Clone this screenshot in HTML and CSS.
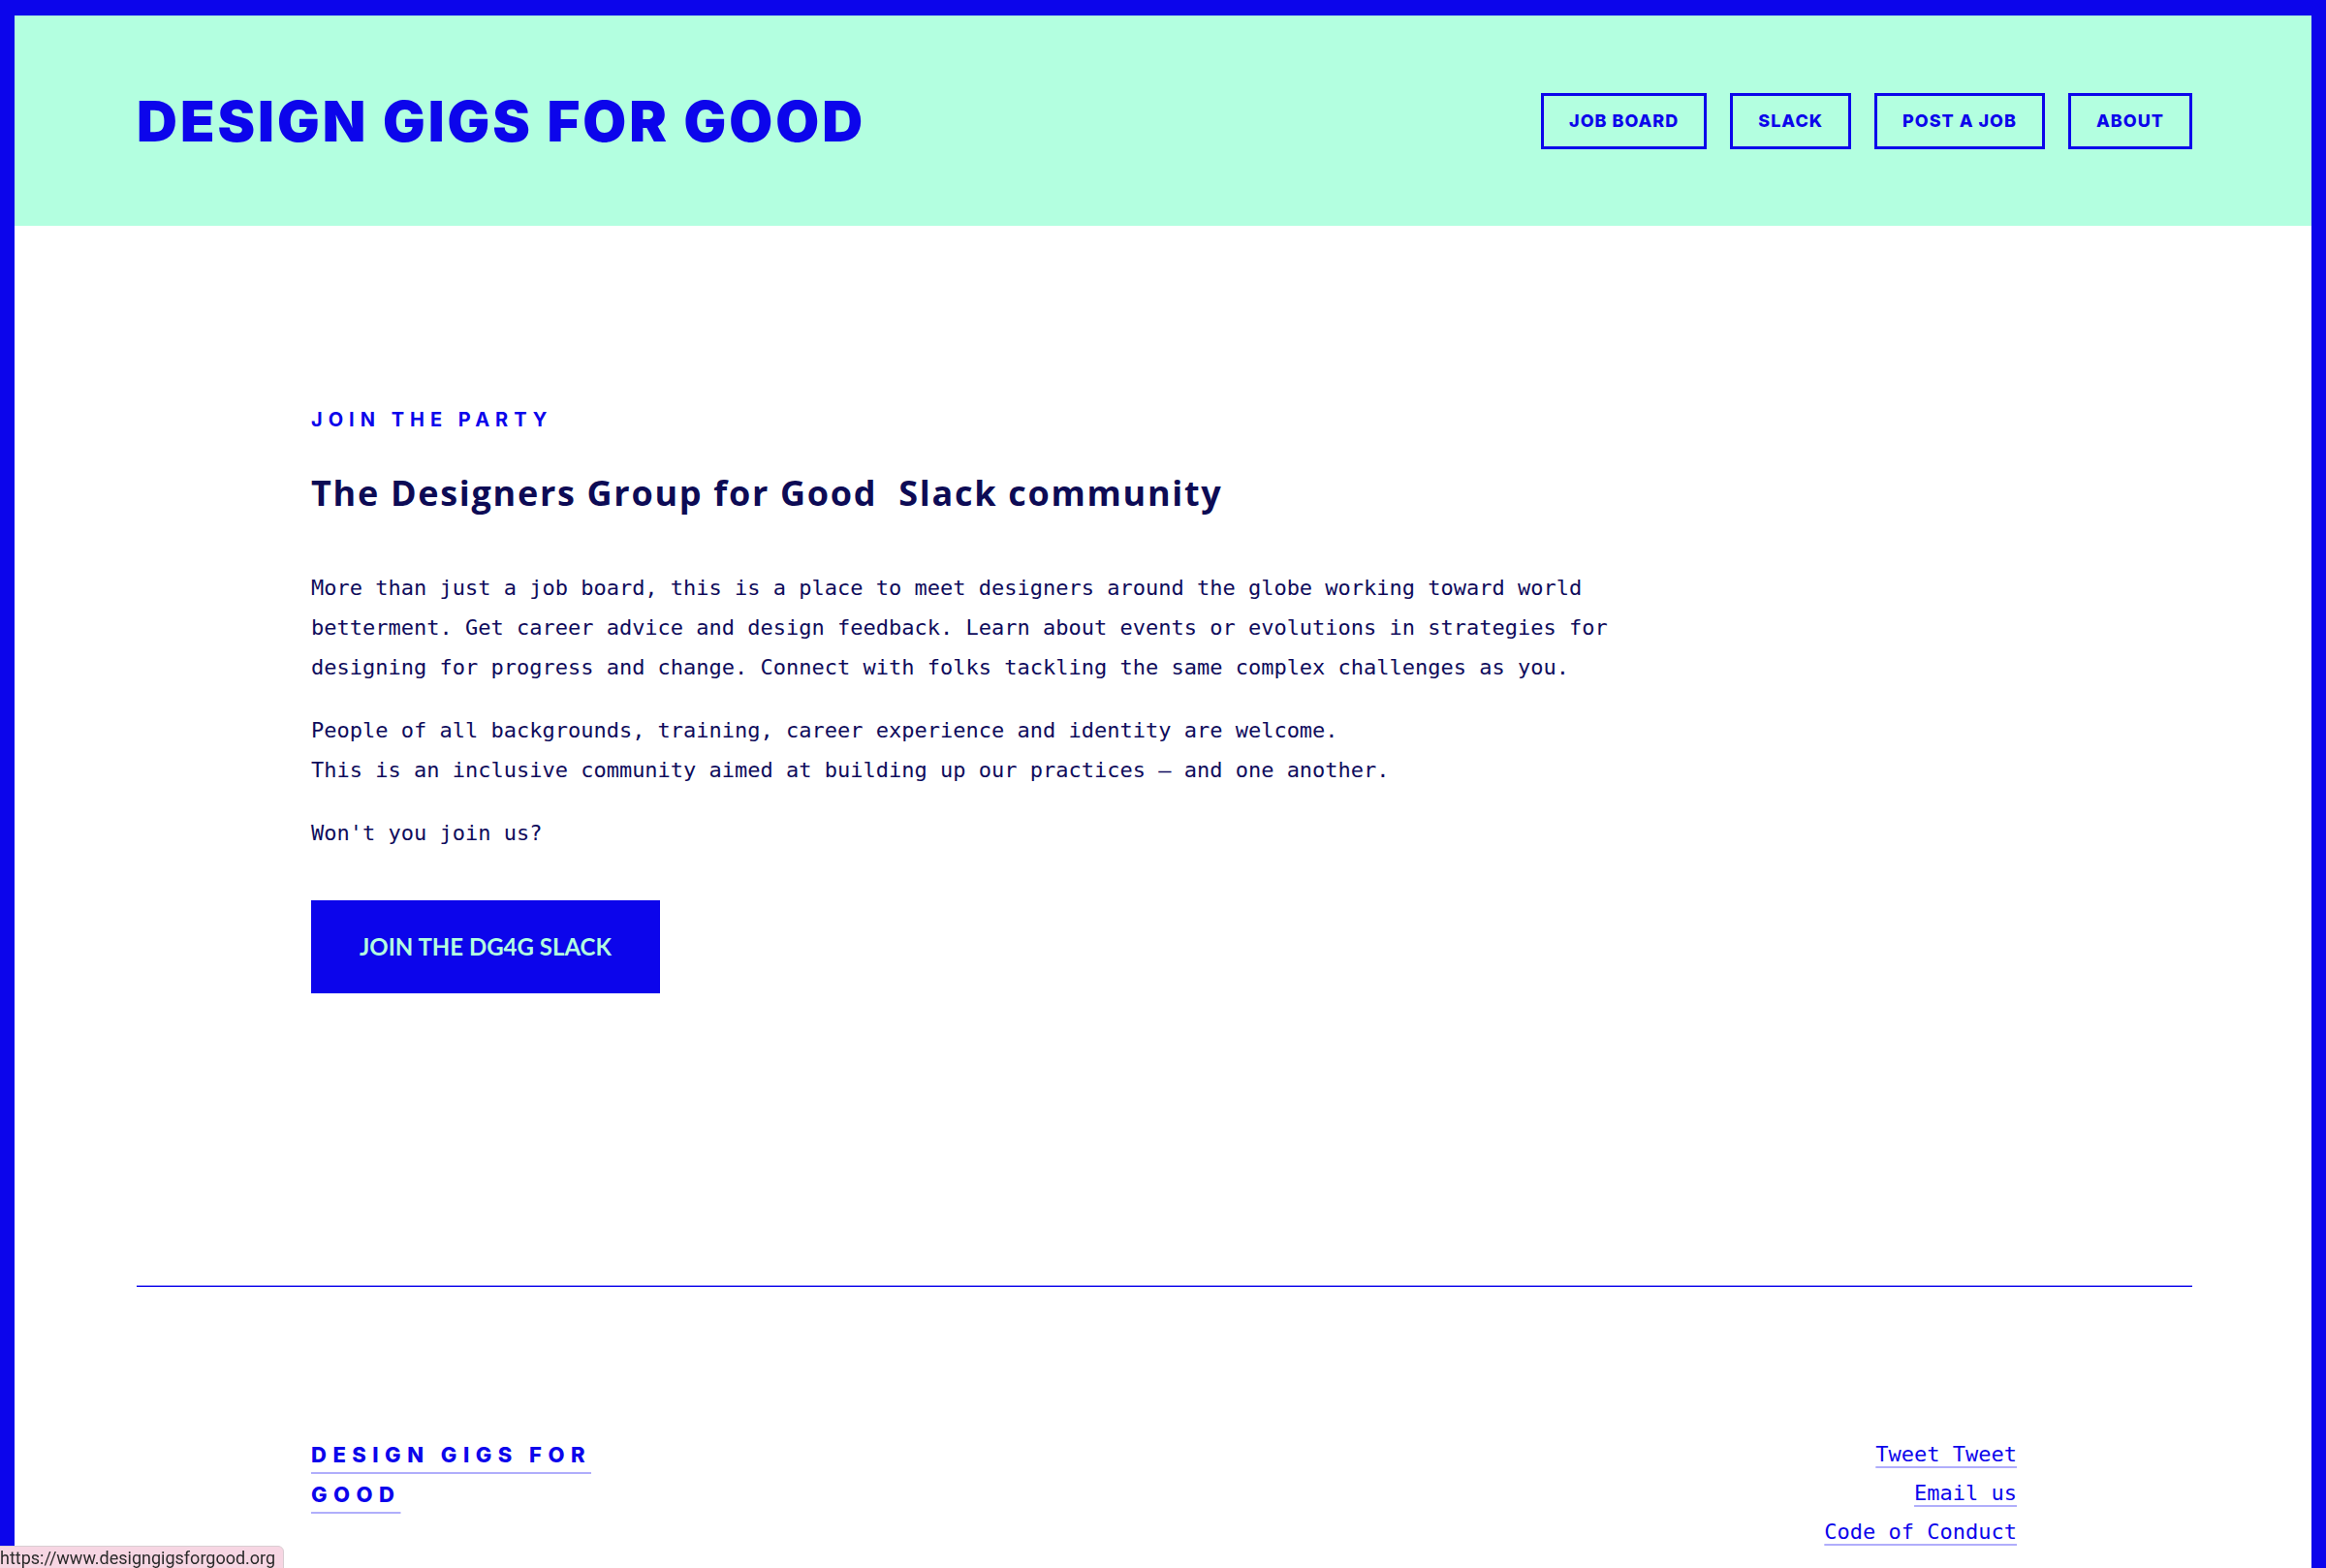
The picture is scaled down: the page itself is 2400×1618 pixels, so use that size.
FILE: index.html
```html
<!DOCTYPE html>
<html lang="en">
<head>
  <meta charset="UTF-8">
  <title>Slack | Design Gigs for Good</title>
  <link rel="stylesheet" href="styles.css">
</head>
<body>
  <div class="frame">
    <header class="site-header">
      <a class="logo" href="#">DESIGN GIGS FOR GOOD</a>
      <nav class="nav">
        <a href="#">Job Board</a>
        <a href="#">Slack</a>
        <a href="#">Post a Job</a>
        <a href="#">About</a>
      </nav>
    </header>

    <main class="content">
      <p class="eyebrow">Join the party</p>
      <h1 class="headline">The Designers Group for Good&nbsp; Slack community</h1>

      <p class="copy">More than just a job board, this is a place to meet designers around the globe working toward world betterment. Get career advice and design feedback. Learn about events or evolutions in strategies for designing for progress and change. Connect with folks tackling the same complex challenges as you.</p>
      <p class="copy">People of all backgrounds, training, career experience and identity are welcome.<br>This is an inclusive community aimed at building up our practices — and one another.</p>
      <p class="copy">Won't you join us?</p>

      <a class="cta" href="#">Join the DG4G Slack</a>
    </main>

    <div class="rule-wrap">
      <hr class="rule">
    </div>

    <footer class="site-footer">
      <div class="footer-brand">
        <a href="#">DESIGN GIGS FOR GOOD</a>
      </div>
      <ul class="footer-links">
        <li><a href="#">Tweet Tweet</a></li>
        <li><a href="#">Email us</a></li>
        <li><a href="#">Code of Conduct</a></li>
      </ul>
    </footer>
  </div>

  <div class="status">https://www.designgigsforgood.org</div>
</body>
</html>
```

FILE: styles.css
```css
body {
  margin: 0;
  background-color: #fff;
  font-family: 'DejaVu Sans Mono', monospace;
  color: #0f0c5c;
}

a {
  color: inherit;
  text-decoration: none;
}

.frame {
  border: 15px solid #0c05eb;
  border-top-width: 16px;
  min-height: 2000px;
}

/* header */

.site-header {
  height: 217px;
  background-color: #b3ffe0;
  padding: 0 123px 0 126px;
  display: flex;
  align-items: center;
  justify-content: space-between;
}

.logo {
  font-family: 'Inter', sans-serif;
  font-weight: 900;
  font-size: 58px;
  line-height: 1;
  letter-spacing: 3px;
  color: #0c05eb;
}

.nav {
  display: flex;
  gap: 24px;
}

.nav a {
  display: block;
  height: 52px;
  line-height: 52px;
  padding: 0 26px;
  border: 3px solid #0c05eb;
  font-family: 'Inter', sans-serif;
  font-weight: 800;
  font-size: 18px;
  letter-spacing: 1px;
  text-transform: uppercase;
  color: #0c05eb;
}

/* main */

.content {
  padding: 188px 306px 301px;
}

.eyebrow {
  margin: 0;
  font-family: 'Inter', sans-serif;
  font-weight: 700;
  font-size: 20px;
  line-height: 24px;
  letter-spacing: 6px;
  text-transform: uppercase;
  color: #0c05eb;
}

.headline {
  margin: 42px 0 55px;
  font-family: 'Open Sans', sans-serif;
  font-weight: 700;
  font-size: 36px;
  line-height: 44px;
  letter-spacing: 1.7px;
  color: #0d0b55;
}

.copy {
  margin: 0 0 24px;
  max-width: 1400px;
  font-size: 22px;
  line-height: 41px;
}

.cta {
  display: inline-block;
  margin-top: 25px;
  height: 96px;
  line-height: 96px;
  padding: 0 50px;
  background-color: #0c05eb;
  font-family: 'Lato', sans-serif;
  font-weight: 700;
  font-size: 24px;
  text-transform: uppercase;
  color: #b3ffe0;
}

/* divider */

.rule-wrap {
  padding: 0 123px 0 126px;
}

.rule {
  margin: 0;
  height: 0;
  border: 0;
  border-top: 1px solid #9592f6;
  border-bottom: 1px solid #0c05eb;
}

/* footer */

.site-footer {
  padding: 153px 304px 120px 306px;
  display: flex;
  justify-content: space-between;
  align-items: flex-start;
}

.footer-brand {
  width: 300px;
  font-family: 'Inter', sans-serif;
  font-weight: 800;
  font-size: 22px;
  line-height: 41px;
  letter-spacing: 6.5px;
  color: #0c05eb;
}

.footer-brand a {
  text-decoration: underline;
  text-decoration-color: #b0aefb;
  text-decoration-thickness: 2px;
  text-underline-offset: 10px;
}

.footer-links {
  margin: 0;
  padding: 0;
  list-style: none;
  text-align: right;
  font-size: 22px;
  line-height: 40px;
  color: #0c05eb;
}

.footer-links a {
  text-decoration: underline;
  text-decoration-color: #b0aefb;
  text-decoration-thickness: 2px;
  text-underline-offset: 5px;
}

/* browser link preview bubble */

.status {
  position: fixed;
  left: -1px;
  bottom: -4px;
  height: 25px;
  padding: 0 8px 0 0;
  background-color: #f7d6e3;
  border: 1px solid #d9cdd2;
  border-top-right-radius: 6px;
  font-family: 'Roboto', sans-serif;
  font-size: 18px;
  line-height: 24px;
  color: #2b2b2b;
}
```
